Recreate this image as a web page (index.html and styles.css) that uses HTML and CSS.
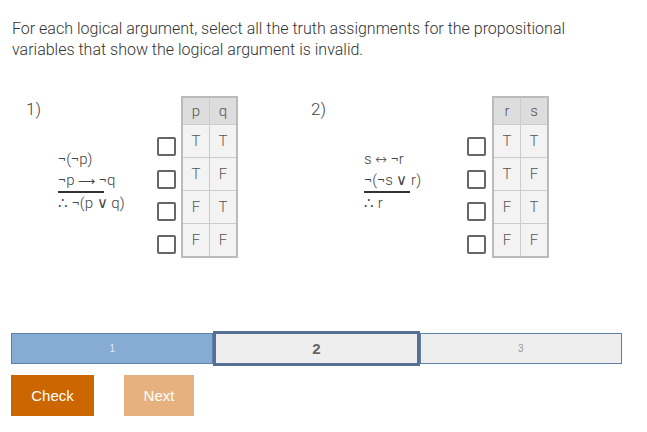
FILE: index.html
```html
<!DOCTYPE html>
<html>
<head>
<meta charset="utf-8">
<link rel="stylesheet" href="styles.css">
</head>
<body>
<p class="prompt">For each logical argument, select all the truth assignments for the propositional variables that show the logical argument is invalid.</p>

<div class="problems">
  <div class="problem problem-1">
    <div class="label">1)</div>
    <div class="arg">
      <div class="line">¬(¬p)</div>
      <div class="line">¬p <span class="sym">⟶</span> ¬q</div>
      <div class="rule"></div>
      <div class="line">∴ ¬(p <span class="sym sym-or">∨</span> q)</div>
    </div>
    <div class="checks">
      <input type="checkbox" class="box">
      <input type="checkbox" class="box">
      <input type="checkbox" class="box">
      <input type="checkbox" class="box">
    </div>
    <table class="truth">
      <tr><th>p</th><th>q</th></tr>
      <tr><td>T</td><td>T</td></tr>
      <tr><td>T</td><td>F</td></tr>
      <tr><td>F</td><td>T</td></tr>
      <tr><td>F</td><td>F</td></tr>
    </table>
  </div>

  <div class="problem problem-2">
    <div class="label">2)</div>
    <div class="arg">
      <div class="line">s <span class="sym sym-iff">↔</span> ¬r</div>
      <div class="line">¬(¬s <span class="sym sym-or">∨</span> r)</div>
      <div class="rule"></div>
      <div class="line">∴ r</div>
    </div>
    <div class="checks">
      <input type="checkbox" class="box">
      <input type="checkbox" class="box">
      <input type="checkbox" class="box">
      <input type="checkbox" class="box">
    </div>
    <table class="truth">
      <tr><th>r</th><th>s</th></tr>
      <tr><td>T</td><td>T</td></tr>
      <tr><td>T</td><td>F</td></tr>
      <tr><td>F</td><td>T</td></tr>
      <tr><td>F</td><td>F</td></tr>
    </table>
  </div>
</div>

<div class="progress">
  <div class="seg seg-done">1</div>
  <div class="seg seg-current">2</div>
  <div class="seg seg-todo">3</div>
</div>

<div class="actions">
  <button class="btn btn-check">Check</button>
  <button class="btn btn-next">Next</button>
</div>
</body>
</html>
```

FILE: styles.css
```css
html, body {
  margin: 0;
  padding: 0;
  background: #fff;
}

body {
  font-family: Roboto, "Liberation Sans", sans-serif;
  color: #444;
}

.prompt {
  margin: 0;
  padding: 18px 12px 0 12px;
  font-size: 16px;
  font-weight: 300;
  line-height: 21px;
  color: #333;
  width: 600px;
}

.problems {
  display: flex;
  gap: 73px;
  padding-left: 26px;
  margin-top: 36px;
}

.problem {
  display: flex;
  align-items: flex-start;
}

.label {
  font-size: 17px;
  font-weight: 300;
  line-height: 20px;
  margin-top: 3px;
  color: #444;
}

.problem-1 .label { width: 32px; }
.problem-2 .label { width: 53px; }

.arg {
  padding-top: 53px;
  font-size: 15px;
  font-weight: 300;
  line-height: 21px;
  color: #444;
  white-space: nowrap;
}

.sym {
  font-family: "DejaVu Sans", sans-serif;
  font-weight: 200;
  font-size: 12px;
  line-height: 1;
}

.sym-or { font-size: 15px; }
.sym-iff { font-size: 14px; }

.problem-1 .arg { width: 99px; }
.problem-2 .arg { width: 103px; }

.rule {
  width: 46px;
  height: 2px;
  background: #333;
}

.checks {
  display: flex;
  flex-direction: column;
  gap: 13.5px;
  padding-top: 41px;
  margin-right: 5px;
}

.problem-2 .checks { margin-right: 6px; }

.box {
  appearance: none;
  -webkit-appearance: none;
  margin: 0;
  width: 19px;
  height: 19px;
  border: 2px solid #666;
  border-radius: 2px;
  background: #fff;
  box-sizing: border-box;
}

.truth {
  border: 2px solid #bbb;
  border-collapse: separate;
  border-spacing: 0;
  font-size: 15px;
  font-weight: 300;
  color: #555;
}

.truth th,
.truth td {
  width: 26px;
  padding: 0;
  text-align: center;
  vertical-align: middle;
  border-left: 1px solid #ccc;
  border-top: 1px solid #ccc;
  font-weight: 300;
}

.truth th:first-child,
.truth td:first-child {
  border-left: none;
}

.truth th {
  height: 26px;
  background: #ddd;
  border-top: none;
}

.truth td {
  height: 32px;
  background: #f3f3f3;
}

.progress {
  display: flex;
  align-items: center;
  margin: 73px 25px 0 11px;
  height: 35px;
  font-family: "Liberation Sans", Arial, sans-serif;
}

.seg {
  flex: 1;
  box-sizing: border-box;
  height: 31px;
  display: flex;
  align-items: center;
  justify-content: center;
  background: #eeeeee;
  border: 1px solid #5c80a8;
  font-size: 10px;
}

.seg-done {
  background: #87acd3;
  color: #dde6f2;
}

.seg-current {
  height: 35px;
  border: 3px solid #576f92;
  font-size: 15px;
  font-weight: bold;
  color: #666;
}

.seg-todo {
  color: #999;
}

.actions {
  display: flex;
  gap: 30px;
  margin: 9px 0 0 11px;
}

.btn {
  border: none;
  height: 41px;
  padding: 0;
  font-family: "Liberation Sans", Arial, sans-serif;
  font-size: 15px;
  color: #fff;
}

.btn-check {
  width: 83px;
  background: #cc6600;
}

.btn-next {
  width: 70px;
  background: #e6b17f;
}
```
